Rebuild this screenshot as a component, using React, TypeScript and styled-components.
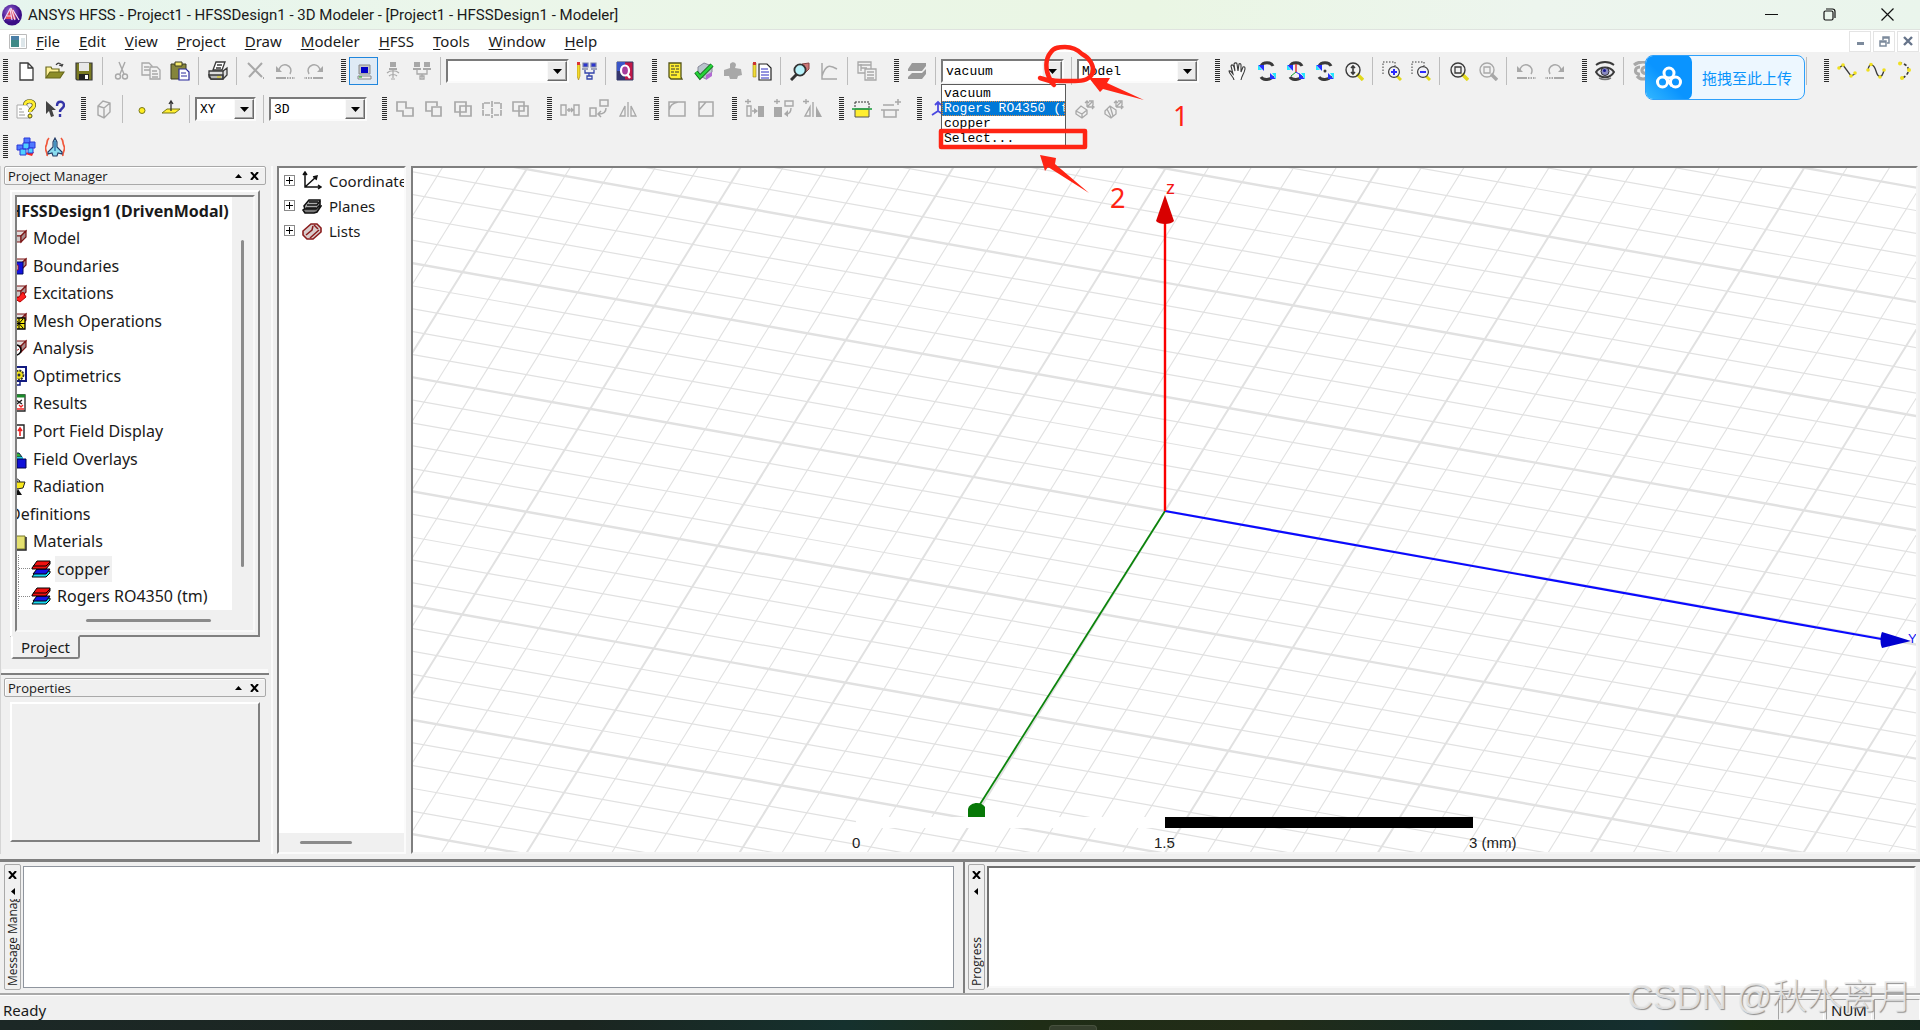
import React from "react";
import styled, { createGlobalStyle, css } from "styled-components";

const UI = `"Noto Sans", "Open Sans", "Noto Sans CJK SC", sans-serif`;
const CAPTION = `"Open Sans", "Noto Sans", sans-serif`;
const MONO = `"Liberation Mono", "DejaVu Sans Mono", monospace`;
const FACE = "#f0f0f0";
const SHADOW = "#7f7f7f";
const RED = "#ff2414";
const G = "#a8a8a8";
const K = "#3a3a3a";

const Global = createGlobalStyle`
  * { box-sizing: border-box; }
  body { margin: 0; background: ${FACE}; color: #1a1a1a; font-family: ${UI}; overflow: hidden; }
  button, select { font: inherit; color: inherit; }
`;

/* ---------- frame ---------- */

const Window = styled.div`
  position: relative;
  display: flex;
  flex-direction: column;
  height: 100vh;
  background: ${FACE};
`;

const TitleBar = styled.header`
  display: flex;
  align-items: center;
  height: 30px;
  padding: 0 4px 0 2px;
  border-bottom: 1px solid #dfe3df;
  background: linear-gradient(90deg, #e6f5ee 0%, #ebf6ea 25%, #eaf6e4 60%, #edf5ee 80%, #eaf5ec 100%);
`;

const Title = styled.h1`
  flex: 1;
  margin: 0 0 0 6px;
  font-family: Roboto, ${UI};
  font-size: 15px;
  font-weight: 400;
  line-height: 20px;
`;

const WindowButton = styled.button`
  display: grid;
  place-items: center;
  width: 58px;
  height: 28px;
  padding: 0;
  border: 0;
  background: none;
`;

const MenuBar = styled.nav`
  display: flex;
  align-items: center;
  gap: 19px;
  height: 22px;
  padding: 0 1px 0 9px;
  background: #fff;
`;

const MenuIcon = styled.span`
  display: grid;
  width: 18px;
  margin-right: -10px;
`;

const MenuItem = styled.button`
  padding: 0;
  border: 0;
  background: none;
  font-size: 15px;
  line-height: 20px;
`;

const MenuText = styled.span`
  display: block;
  &::first-letter { text-decoration: underline; text-underline-offset: 2px; }
`;

const MdiControls = styled.div`
  display: flex;
  gap: 2px;
  margin-left: auto;
`;

const MdiButton = styled.button`
  display: grid;
  place-items: center;
  width: 22px;
  height: 21px;
  padding: 0;
  border: 1px solid #e4e4e4;
  background: #fff;
`;

/* ---------- toolbars ---------- */

const ToolbarArea = styled.div`
  display: flex;
  flex-direction: column;
  background: #f1f1f1;
`;

const ToolbarRow = styled.div<{ $tight?: boolean }>`
  display: flex;
  align-items: center;
  gap: ${(p) => (p.$tight ? 12 : 13)}px;
  height: 38px;
  padding-left: 3px;
  overflow: hidden;
  &:last-child { height: 37px; }
`;

const Toolbar = styled.div`
  display: flex;
  flex: none;
  align-items: center;
`;

const Grip = styled.span`
  width: 5px;
  height: 24px;
  margin-right: 3px;
  background: repeating-linear-gradient(180deg, #2c2c2c 0 1px, #f1f1f1 1px 2px);
`;

const Tool = styled.button<{ $on?: boolean }>`
  display: grid;
  place-items: center;
  width: 29px;
  height: 28px;
  padding: 0;
  border: 1px solid transparent;
  background: none;
  ${(p) => p.$on && css`border-color: #1f86dd; background: #dfeaf5;`}
`;

const Rule = styled.span`
  width: 1px;
  height: 28px;
  margin: 0 4px;
  background: #bdbdbd;
`;

const ComboBox = styled.span<{ $w: number }>`
  display: flex;
  width: ${(p) => p.$w}px;
  height: 24px;
  margin: 0 3px 0 1px;
  border: 2px solid;
  border-color: #7a7a7a #fbfbfb #fbfbfb #7a7a7a;
  background: #fff;
`;

const ComboField = styled.select`
  flex: 1;
  min-width: 0;
  padding: 0 0 0 3px;
  border: 0;
  appearance: none;
  background: none;
  color: #000;
  font-family: ${MONO};
  font-size: 13px;
  outline: 0;
`;

const ComboArrow = styled.span`
  display: grid;
  place-items: center;
  width: 20px;
  border: 1px solid;
  border-color: #fafafa #6a6a6a #6a6a6a #fafafa;
  background: #ececec;
  box-shadow: inset -1px -1px #a5a5a5;
`;

const Popup = styled.ul`
  position: absolute;
  z-index: 2;
  left: 941px;
  top: 84px;
  width: 125px;
  margin: 0;
  padding: 1px 0 0;
  overflow: hidden;
  border: 1px solid #5b5b5b;
  background: #fff;
  color: #000;
  font-family: ${MONO};
  font-size: 13px;
  line-height: 15px;
  list-style: none;
  white-space: nowrap;
`;

const PopupItem = styled.li<{ $on?: boolean }>`
  padding-left: 2px;
  ${(p) => p.$on && css`background: #0078d7; color: #fff; outline: 1px dotted #e08a3c; outline-offset: -1px;`}
`;

/* ---------- docks ---------- */

const Workspace = styled.main`
  display: flex;
  flex: 1;
  min-height: 0;
  padding: 1px 2px 5px 0;
`;

const LeftDock = styled.aside`
  display: flex;
  flex-direction: column;
  flex: none;
  width: 273px;
  margin-right: 4px;
  padding-right: 2px;
  border-left: 1px solid #d5d5d5;
  border-right: 2px solid #fbfbfb;
`;

const Caption = styled.div`
  display: flex;
  align-items: center;
  height: 19px;
  margin: 0 3px;
  padding: 0 3px;
  border: 1px solid #a9a9a9;
  border-radius: 2px;
  box-shadow: inset 1px 1px #fff;
  font-family: ${CAPTION};
  font-size: 13px;
`;

const CaptionText = styled.h2`
  flex: 1;
  margin: 0;
  font-size: inherit;
  font-weight: 400;
  line-height: 16px;
`;

const CaptionButton = styled.button`
  display: grid;
  flex: none;
  place-items: center;
  width: 16px;
  height: 16px;
  padding: 0;
  border: 0;
  background: none;
`;

const ProjectPane = styled.section`
  display: flex;
  flex: 1;
  flex-direction: column;
  min-height: 0;
`;

const Raised = styled.div`
  display: flex;
  flex: 1;
  min-height: 0;
  margin: 5px 9px 0 9px;
  padding: 3px;
  border: 2px solid;
  border-color: #fff #808080 #808080 #fff;
`;

const Sunken = styled.div`
  display: grid;
  flex: 1;
  grid-template: minmax(0, 1fr) 20px / minmax(0, 1fr) 21px;
  min-width: 0;
  border: 2px solid;
  border-color: ${SHADOW} #f8f8f8 #f8f8f8 ${SHADOW};
`;

const TreeView = styled.div`
  overflow: hidden;
  background: #fff;
`;

const TreeList = styled.ul`
  display: flex;
  flex-direction: column;
  height: 100%;
  margin: 0 0 0 -40px;
  padding: 0;
  list-style: none;
`;

const TreeRow = styled.li<{ $level: number }>`
  display: flex;
  flex: 1;
  align-items: center;
  gap: 4px;
  padding-left: ${(p) => 6 + p.$level * 24}px;
  white-space: nowrap;
  ${(p) =>
    p.$level === 2 &&
    css`
      background:
        repeating-linear-gradient(180deg, #888 0 1px, transparent 1px 2px) 41px 0 / 1px 100% no-repeat,
        repeating-linear-gradient(90deg, #888 0 1px, transparent 1px 2px) 42px 50% / 12px 1px no-repeat;
    `}
`;

const TreeIcon = styled.span`
  display: grid;
  flex: none;
  width: 20px;
  height: 20px;
`;

const TreeText = styled.span<{ $bold?: boolean; $on?: boolean }>`
  padding: 0 2px;
  background: ${(p) => (p.$on ? "#f0f0f0" : "transparent")};
  font-size: 16px;
  font-weight: ${(p) => (p.$bold ? 700 : 400)};
  line-height: 26px;
`;

const VScroll = styled.span`
  width: 3px;
  margin: 43px 0 43px 9px;
  border-radius: 2px;
  background: #8b8b8b;
`;

const HScroll = styled.span<{ $from: number; $to: number }>`
  align-self: center;
  height: 3px;
  margin: 0 ${(p) => p.$to}px 0 ${(p) => p.$from}px;
  border-radius: 2px;
  background: #8b8b8b;
`;

const DockTab = styled.button`
  align-self: flex-start;
  z-index: 1;
  width: 69px;
  height: 24px;
  margin: -2px 0 14px 10px;
  padding: 0;
  border: 2px solid;
  border-color: ${FACE} #808080 #808080 #fff;
  border-radius: 0 0 3px 2px;
  background: ${FACE};
  font-size: 15px;
  line-height: 20px;
`;

const PropertiesPane = styled.section`
  display: flex;
  flex-direction: column;
  flex: none;
  height: 181px;
  padding: 3px 0 12px;
  border-top: 2px solid ${SHADOW};
  box-shadow: 0 -5px 0 -1px #fafafa;
`;

const ModelTree = styled.section`
  display: flex;
  flex: none;
  flex-direction: column;
  width: 129px;
  margin-right: 5px;
  border: 2px solid;
  border-color: ${SHADOW} #fbfbfb #fbfbfb ${SHADOW};
  background: ${FACE};
`;

const ModelList = styled.ul`
  flex: 1;
  margin: 0;
  padding: 0 0 0 5px;
  overflow: hidden;
  background: #fff;
  list-style: none;
`;

const ModelRow = styled.li`
  display: flex;
  align-items: center;
  gap: 7px;
  height: 25px;
  font-size: 15px;
  white-space: nowrap;
`;

const ModelScroll = styled.div`
  display: grid;
  height: 19px;
`;

const Expander = styled.button`
  display: grid;
  flex: none;
  place-items: center;
  width: 11px;
  height: 11px;
  padding: 0;
  border: 1px solid #8a8a8a;
  background: #fff;
`;

const Viewport = styled.section`
  display: flex;
  flex: 1;
  min-width: 0;
  border: 2px solid;
  border-color: ${SHADOW} #f4f4f4 #f4f4f4 ${SHADOW};
  background: #fff;
`;

const Scene = styled.svg`
  flex: 1;
  min-width: 0;
  width: 100%;
  height: auto;
`;

const BottomDock = styled.div`
  display: flex;
  flex: none;
  height: 136px;
  border-top: 3px solid ${SHADOW};
  border-bottom: 2px solid #a9a9a9;
`;

const BottomPane = styled.section<{ $first?: boolean }>`
  display: flex;
  flex: ${(p) => (p.$first ? "961 1 0" : "959 1 0")};
  gap: 2px;
  min-width: 0;
  padding: 2px ${(p) => (p.$first ? 9 : 4)}px 3px ${(p) => (p.$first ? 4 : 3)}px;
  border-right: ${(p) => (p.$first ? `2px solid ${SHADOW}` : "0")};
`;

const SideCaption = styled.div`
  display: flex;
  flex: none;
  flex-direction: column;
  align-items: center;
  width: 17px;
  padding: 2px 0 3px;
  border: 1px solid #a9a9a9;
  border-radius: 2px;
  font-family: ${CAPTION};
  font-size: 12px;
`;

const SideText = styled.h2`
  flex: 1;
  min-height: 0;
  margin: 0;
  overflow: hidden;
  font-size: inherit;
  font-weight: 400;
  line-height: 15px;
  text-align: left;
  white-space: nowrap;
  writing-mode: vertical-rl;
  transform: rotate(180deg);
`;

const Output = styled.div<{ $deep?: boolean }>`
  flex: 1;
  margin: 2px 0 2px;
  border: ${(p) => (p.$deep ? "2px solid" : "1px solid #8f959e")};
  ${(p) => p.$deep && css`border-color: #6f6f6f #f8f8f8 #f8f8f8 #6f6f6f;`}
  background: #fff;
`;

const StatusBar = styled.footer`
  display: flex;
  flex: none;
  justify-content: space-between;
  height: 25px;
  padding: 3px 0 0 3px;
  border-top: 1px solid #fff;
  font-size: 15px;
  line-height: 22px;
`;

const StatusCells = styled.div`
  display: flex;
  gap: 2px;
`;

const StatusCell = styled.span`
  width: 46px;
  border: 1px solid;
  border-color: #a5a5a5 #fff transparent #a5a5a5;
  line-height: 20px;
  text-align: center;
`;

const Taskbar = styled.div`
  display: flex;
  flex: none;
  justify-content: center;
  height: 10px;
  padding: 5px 0 0 226px;
  background: linear-gradient(90deg, #1c2826 0%, #1b2520 30%, #15312e 44%, #1f2d16 54%, #222c18 66%, #142b27 78%, #152f2f 86%, #1b2f16 91%, #16291f 100%);
`;

const TaskTab = styled.span`
  width: 48px;
  border: 1px solid #47513e;
  border-bottom: 0;
  border-radius: 4px 4px 0 0;
  background: #353f2d;
`;

/* ---------- overlays ---------- */

const Upload = styled.button`
  position: absolute;
  z-index: 2;
  top: 55px;
  right: 115px;
  display: flex;
  align-items: center;
  width: 160px;
  height: 45px;
  padding: 0;
  overflow: hidden;
  border: 1px solid #2da0fb;
  border-radius: 8px;
  background: #edf7ff;
  color: #0a94fb;
  font-family: "Noto Sans CJK SC", sans-serif;
  font-size: 15px;
`;

const UploadMark = styled.span`
  display: grid;
  place-items: center;
  width: 46px;
  height: 45px;
  margin-right: 10px;
  border-radius: 0 7px 7px 0;
  background: linear-gradient(45deg, #34b8ff, #0a94ff 45%);
`;

const Markup = styled.svg`
  position: absolute;
  z-index: 3;
  left: 930px;
  top: 40px;
  pointer-events: none;
`;

const Watermark = styled.p`
  position: absolute;
  z-index: 3;
  right: 8px;
  bottom: 9px;
  margin: 0;
  color: rgba(235, 235, 235, 0.85);
  font-family: "Liberation Sans", "Noto Sans CJK SC", sans-serif;
  font-size: 35px;
  font-weight: 300;
  line-height: 48px;
  text-shadow: 1px 1px 1px #8f8f8f;
  white-space: nowrap;
  pointer-events: none;
`;

/* ---------- icon drawings, on a 20 unit square ---------- */

const undoShape = (
  <g fill="none" stroke={G} strokeWidth="1.5">
    <path d="M4 10a6 6 0 1 1 11 3" />
    <path d="M1 5v6h6z" fill={G} stroke="none" />
    <path d="M1 17h10" strokeWidth="2" />
    <path d="M12 17h8" strokeWidth="2" strokeDasharray="1.5 1" />
  </g>
);
const lens = (c: string) => (
  <>
    <path d="M13 13l6 6" stroke={c === G ? G : "#e2d91c"} strokeWidth="3.4" />
    <circle cx="9" cy="9" r="7" fill="none" stroke={c} strokeWidth="1.4" />
  </>
);
const rotArcs = (
  <>
    <path d="M4 5C6 .5 14 .5 16 5M16 15c-2 4.500-10 4.500-12 1" fill="none" stroke={K} strokeWidth="3" />
    <path d="M1 4h6v6z" fill="#2430ff" />
    <path d="M1 4v5h4z" fill="#25e6ff" />
    <path d="M19 18h-6v-6z" fill="#2430ff" />
    <path d="M19 18v-6h-4z" fill="#25e6ff" />
  </>
);
const pc = (x: number, y: number, c = G) => (
  <g fill={c}><path d={`M${x} ${y}h6v5h-6z`} /><path d={`M${x - 1} ${y + 6}h8v2h-8z`} /></g>
);
const mirror = (
  <path d="M2 17l5-10v10zM13 7l5 10h-5zM10 3v15" fill="none" stroke={G} strokeWidth="1.3" />
);
const brick = (
  <g stroke="#7c1515" strokeWidth="1.2">
    <path d="M2 8l5-5h12l-5 5z" fill="#e3dcdc" />
    <path d="M2 8h12v6H2z" fill="#cfc6c6" />
    <path d="M14 8l5-5v6l-5 5z" fill="#a98e8e" />
  </g>
);
const slab = (
  <>
    <path d="M1 18l4-6h14v2l-4 4z" fill="#18d8f0" stroke="#000" />
    <path d="M2 15l4-5h13l-4 5z" fill="#1414e6" stroke="#000" />
    <path d="M1 9l5-7h13v3l-4 5H1z" fill="#f01010" stroke="#000" />
    <path d="M2 7h13l4-4" fill="none" stroke="#000" />
  </>
);

const icons: Record<string, React.ReactNode> = {
  new: <path d="M4 2h8l5 5v12H4zM12 2v5h5" fill="#fff" stroke={K} strokeWidth="1.3" />,
  open: (
    <g stroke="#66661a" strokeWidth="1.2">
      <path d="M1 17V6h5l1 2h7v3" fill="#fff29a" />
      <path d="M1 17l4-6h14l-4 6z" fill="#8d8d28" />
      <path d="M11 4c2-3 5-2 6 1l1-2M17 5l-3-1" fill="none" stroke={K} />
    </g>
  ),
  save: (
    <>
      <path d="M2 2h16v17H3l-1-1z" fill="#7a7a22" stroke={K} strokeWidth="1.2" />
      <path d="M5 2h10v8H5z" fill="#e8e8e8" />
      <path d="M5 13h10v6H5z" fill="#222" />
      <path d="M11 14h3v4h-3z" fill="#fff" />
    </>
  ),
  cut: (
    <g fill="none" stroke={G} strokeWidth="1.4">
      <path d="M7 1l5 12M13 1L8 13" />
      <circle cx="6" cy="15.500" r="2.500" />
      <circle cx="13" cy="15.500" r="2.500" />
    </g>
  ),
  copy: (
    <g fill="#f1f1f1" stroke={G} strokeWidth="1.3">
      <path d="M1 2h7l3 3v9H1zM3 6h5M3 9h6" />
      <path d="M9 6h7l3 3v9H9zM11 10h5M11 13h6M11 16h6" />
    </g>
  ),
  paste: (
    <>
      <path d="M1 3h15v15H1z" fill="#85853c" stroke="#3b3b22" />
      <path d="M5 1h7v4H5z" fill="#f5e96c" stroke="#3b3b22" />
      <path d="M9 8h7l3 3v8H9z" fill="#fff" stroke="#2a2a9c" strokeWidth="1.200" />
      <path d="M11 12h5M11 15h6" stroke="#2a2a9c" />
    </>
  ),
  print: (
    <g stroke={K} strokeWidth="1.3">
      <path d="M5 9l3-8h9l-3 8z" fill="#fff" />
      <path d="M9 4h5M8 7h5" />
      <path d="M1 10h14l4-3v7l-4 4H3l-2-2z" fill="#ddd" />
      <path d="M1 14h14v4H3z" fill="#b8b8b8" />
      <path d="M15 10v8" />
      <path d="M9 16h4" stroke="#ddcc22" />
    </g>
  ),
  del: <path d="M2 2l14 14M16 2L3 16M17 17h1" stroke={G} strokeWidth="2" />,
  undo: undoShape,
  redo: <g transform="matrix(-1 0 0 1 20 0)">{undoShape}</g>,
  local: (
    <>
      <path d="M5 4h11v9H5z" fill="#c8c8c8" stroke="#888" />
      <path d="M7 6h7v6H7z" fill="#0000c8" />
      <path d="M4 15h13v3H4z" fill="#eee" stroke="#888" />
      <path d="M5 16h3" stroke="#1a1" />
    </>
  ),
  remote: (
    <>{pc(7, 1)}<path d="M10 9v8M4 12c3-3 9-3 12 0M6 15c2-2 6-2 8 0M8 18h4" fill="none" stroke={G} strokeWidth="1.2" /></>
  ),
  dist: (
    <>{pc(2, 1)}{pc(12, 1)}<path d="M5 9v4h10V9M10 13v4M8 15h4v3H8z" fill="none" stroke={G} strokeWidth="1.3" /></>
  ),
  hpc: (
    <>
      <path d="M6 2h5v4H6zM14 2h5v4h-5z" fill="#2c36d0" stroke="#8088a8" strokeWidth="1.200" />
      <path d="M5 8h6M14 8h6" stroke="#8088a8" strokeWidth="1.600" />
      <path d="M8 9v3h9V9M12 12v3M10 15h5v3h-5z" fill="none" stroke="#3344aa" strokeWidth="1.300" />
      <path d="M0 3h3v12l-1.500 4L0 15z" fill="#f3d92c" stroke="#a08010" strokeWidth=".600" />
      <path d="M0 1h3v3H0z" fill="#d33" />
    </>
  ),
  queue: (
    <>
      <path d="M2 1h16v18H2z" fill="#c01848" stroke="#333a66" />
      <path d="M2 1h8v9H2z" fill="#3a55c8" />
      <path d="M2 10h8v9H2z" fill="#35356e" />
      <path d="M12 13l3 4" stroke="#fff" strokeWidth="2.400" />
      <ellipse cx="10" cy="9.500" rx="4" ry="5" fill="#a83c9c" stroke="#fff" strokeWidth="2.200" />
    </>
  ),
  list: (
    <>
      <path d="M4 2h12v14l1 2H6l-2-2z" fill="#ffee30" stroke="#55551a" strokeWidth="1.300" />
      <path d="M6 5h3M10 5h4M6 8h4M11 8h3M6 11h3M10 11h4M6 14h6" stroke="#333" />
    </>
  ),
  validate: (
    <>
      <path d="M4 6l6-4 8 3v6l-6 7-8-4z" fill="#b9c4cc" stroke="#889" />
      <path d="M12 14l6-3v4l-6 4z" fill="#b36ad2" />
      <path d="M2 11l4 5L18 4" fill="none" stroke="#12611a" strokeWidth="4.400" />
      <path d="M2 11l4 5L18 4" fill="none" stroke="#27d23a" strokeWidth="2.800" />
    </>
  ),
  analyze: <path d="M7 3c2-3 6-2 6 1l-1 3 6 1 1 6-4 1-1 3H7l-1-3H1V9l6-2z" fill={G} />,
  notes: (
    <>
      <path d="M7 3h8l4 4v12H7z" fill="#fff" stroke="#222" strokeWidth="1.200" />
      <path d="M9 8h7M9 11h8M9 14h8M9 17h8" stroke="#2b2bc0" />
      <path d="M1 2h3v14H1z" fill="#f0dc38" stroke="#998018" strokeWidth=".600" />
      <path d="M1 1h3v3H1z" fill="#c33" />
    </>
  ),
  find: (
    <>
      <path d="M7 13l-6 6" stroke="#333" strokeWidth="3" />
      <path d="M12 3l7-1v6l-4 4z" fill="#c77" stroke="#844" />
      <circle cx="10" cy="9" r="5.600" fill="#b9f3fb" stroke="#333" strokeWidth="1.800" />
    </>
  ),
  plot: <path d="M3 2v16h15M3 15C7 3 11 4 18 8" fill="none" stroke={G} strokeWidth="1.500" />,
  report: (
    <g fill="#f1f1f1" stroke={G} strokeWidth="1.300">
      <path d="M1 1h13v11H1zM4 3v7M1 4h13M4 7h6" />
      <path d="M8 8h11v11H8zM10 11h7M10 14h7M10 17h7" />
    </g>
  ),
  layers: (
    <>
      <path d="M5 2h14v3l-4 5H1V8z" fill="#999" />
      <path d="M5 12h10l4-4v5l-4 5H1v-2z" fill="#999" />
    </>
  ),
  help: (
    <>
      <path d="M1 6h10l3 4v9H1z" fill="#fff" stroke="#aaa" />
      <path d="M3 10h3M3 13h5M3 16h6" stroke="#999" />
      <path d="M9 6c0-5 9-5 9 0 0 4-4 3-4 7" fill="none" stroke="#55551a" strokeWidth="4.200" />
      <path d="M9 6c0-5 9-5 9 0 0 4-4 3-4 7" fill="none" stroke="#ffee30" strokeWidth="2.800" />
      <circle cx="14" cy="17" r="2" fill="#ffee30" stroke="#55551a" />
    </>
  ),
  whats: (
    <>
      <path d="M1 2v13l3-3 2 6 3-1-2-6h4z" fill="#444" />
      <path d="M12 7c0-6 7-5 7-1 0 4-4 3-4 7M15 15v3" fill="none" stroke="#3535a8" strokeWidth="2.400" />
    </>
  ),
  box: <path d="M4 7l5-5 7 2v9l-6 6-6-3zM4 7l6 2 6-5M10 9v10" fill="none" stroke={G} strokeWidth="1.400" />,
  dot: <circle cx="10" cy="11.500" r="3" fill="#ffee20" stroke="#77771a" />,
  plane: (
    <>
      <path d="M1 14l5-4h13l-5 4z" fill="#ffee30" stroke="#77771a" />
      <path d="M10 12V3M8 5l2-3 2 3" fill="none" stroke="#333" strokeWidth="1.300" />
    </>
  ),
  unite: <path d="M2 3h9v6h7v8H8v-5H2z" fill="none" stroke={G} strokeWidth="1.700" />,
  subtract: <path d="M8 12H2V3h11v4M8 8h9v9H8z" fill="none" stroke={G} strokeWidth="1.700" />,
  intersect: <path d="M2 3h11v10H2zM7 7h11v10H7z" fill="none" stroke={G} strokeWidth="1.700" />,
  split: <path d="M8 4H1v12h7M12 4h7v12h-7M10 2v17" fill="none" stroke={G} strokeWidth="1.600" strokeDasharray="6 1" />,
  imprint: <path d="M2 3h11v9H2zM8 7h9v10H8z" fill="none" stroke={G} strokeWidth="1.600" />,
  move: <path d="M1 6h5v10H1zM14 6h5v10h-5zM7 11h6M11 9l2 2-2 2M9 9v4" fill="none" stroke={G} strokeWidth="1.400" />,
  rotate: <path d="M1 9h6v8H1zM11 1h8v6h-8zM17 9c0 4-3 6-7 6M12 12l-3 3 3 3" fill="none" stroke={G} strokeWidth="1.500" />,
  mirror,
  fillet: <path d="M2 3h16v14H2zM2 11c1-5 4-7 9-8" fill="none" stroke={G} strokeWidth="1.500" />,
  chamfer: <path d="M3 3h14v14H3zM3 11l7-8" fill="none" stroke={G} strokeWidth="1.500" />,
  dupMove: (
    <><path d="M2 7h4v10H2zM7 12h5M3 0v5M0 2.500h6" fill="none" stroke={G} strokeWidth="1.400" /><path d="M13 7h6v11h-6zM9 9l4 3-4 3z" fill={G} /></>
  ),
  dupRot: (
    <><path d="M11 2h8v5h-8zM17 9c0 4-2 6-5 6M3 0v5M0 2.500h6" fill="none" stroke={G} strokeWidth="1.400" /><path d="M0 8h8v10H0zM14 11v7l-4-3z" fill={G} /></>
  ),
  dupMirror: (
    <><path d="M2 17l5-9v9zM10 3v15M3 0v5M0 2.500h6" fill="none" stroke={G} strokeWidth="1.400" /><path d="M13 7l6 11h-6z" fill={G} /></>
  ),
  section: (
    <>
      <path d="M3 3h14v6M3 3v6" fill="none" stroke="#333" strokeDasharray="2 1" />
      <path d="M3 10h14v8H3z" fill="#ffee30" stroke="#555" />
      <path d="M0 10h20" stroke="#22a043" strokeWidth="1.600" />
    </>
  ),
  section2: <path d="M2 6h11M3 11v7h12v-7M0 11h18M17 0v6M14 3h6" fill="none" stroke={G} strokeWidth="1.500" />,
  axes: <path d="M8 12V3M5 6l3-3 3 3M8 12l-6 4M8 12l6 4" fill="none" stroke="#4a48e0" strokeWidth="1.800" />,
  relCs: <path d="M1 12l5-5 6 4v4l-5 4-6-4zM1 12l6 3 5-4M7 15v4M12 8V2M10 4l2-2 2 2M12 8h6M17 6l2 2-2 2M12 8l5-5M14 2h4v4" fill="none" stroke={G} strokeWidth="1.300" />,
  faceCs: <path d="M1 12l5-5 6 4v4l-5 4-6-4zM3 10l4 8M6 7l3 10M12 8V2M10 4l2-2 2 2M12 8h6M17 6l2 2-2 2M12 8l5-5M14 2h4v4" fill="none" stroke={G} strokeWidth="1.300" />,
  pan: (
    <path d="M6 19c0-3-5-6-5-9 2-1 3 2 4 3L3 5c1-2 2-1 3 1l1 4-1-7c1-2 3-1 3 0l1 7 1-7c1-1 2 0 2 1l0 7 2-5c2-1 2 1 2 2-1 5-3 6-4 11" fill="#fafafa" stroke={K} strokeWidth="1.100" />
  ),
  rot: rotArcs,
  rotAxis: <>{rotArcs}<path d="M10 3v8" stroke="#e01818" strokeWidth="1.300" /><path d="M10 11l-5 4" stroke="#10a030" /><path d="M10 11l6 4" stroke="#22f" /></>,
  rotPoint: <>{rotArcs}<circle cx="10" cy="10" r="1.500" fill={K} /></>,
  zoom: <>{lens(K)}<path d="M9 5v8M7 7l2-2 2 2M7 11l2 2 2-2" fill="none" stroke={K} strokeWidth="1.600" /></>,
  zoomIn: (
    <>
      <path d="M1 13V1h12v4" fill="none" stroke={K} strokeDasharray="1.500 1.500" />
      <path d="M15 15l4 4" stroke="#e2d91c" strokeWidth="3" />
      <circle cx="12" cy="11" r="5.400" fill="#f2f2f6" stroke={K} strokeWidth="1.200" />
      <path d="M9 11h6M12 8v6" stroke="#2a2aff" strokeWidth="2" />
    </>
  ),
  zoomOut: (
    <>
      <path d="M1 13V1h12v4" fill="none" stroke={K} strokeDasharray="1.500 1.500" />
      <path d="M15 15l4 4" stroke="#e2d91c" strokeWidth="3" />
      <circle cx="12" cy="11" r="5.400" fill="#f2f2f6" stroke={K} strokeWidth="1.200" />
      <path d="M9 11h6" stroke="#2a2aff" strokeWidth="2" />
    </>
  ),
  fit: <>{lens(K)}<path d="M6 6h6v6H6z" fill="none" stroke={K} strokeWidth="1.300" /></>,
  fitSel: <>{lens(G)}<path d="M6 6h6v6H6z" fill="none" stroke={G} strokeWidth="1.300" /></>,
  eye: (
    <>
      <path d="M1 4c5-4 13-4 18 0" fill="none" stroke={K} strokeWidth="1.800" />
      <path d="M1 11c4-6 14-6 18 0-4 7-14 7-18 0z" fill="#e8e8ee" stroke={K} strokeWidth="2" />
      <circle cx="10" cy="10.500" r="4" fill="#8a8ac0" stroke="#333" />
      <circle cx="9.500" cy="9.500" r="1.500" fill="#1a1a90" />
      <path d="M4 17c4 2 8 2 12 0" fill="none" stroke="#777" strokeWidth="1.400" />
    </>
  ),
  hide: (
    <path d="M1 4c5-4 13-4 18 0M7 6c-6 0-6 8 0 7M16 6c-9-2-9 8-2 6M4 15c3 4 9 4 12 0" fill="none" stroke={G} strokeWidth="3.200" />
  ),
  poly: <><path d="M2 7l4-3 8 11 4-2" fill="none" stroke={K} strokeWidth="1.300" /><g fill="#f0e020"><circle cx="2" cy="7" r="1.800" /><circle cx="6" cy="4" r="1.800" /><circle cx="14" cy="15" r="1.800" /><circle cx="18" cy="12" r="1.800" /></g></>,
  spline: <><path d="M2 9c1-8 6-6 8 1s6 8 8-1" fill="none" stroke={K} strokeWidth="1.300" /><g fill="#f0e020"><circle cx="2" cy="9" r="1.800" /><circle cx="5" cy="3.500" r="1.800" /><circle cx="14" cy="16" r="1.800" /><circle cx="18" cy="9" r="1.800" /></g></>,
  arc: <><path d="M4 2c10 0 14 10 2 16" fill="none" stroke={K} strokeWidth="1.600" strokeDasharray="3 2" /><g fill="#f0e020"><circle cx="5" cy="2.500" r="2" /><circle cx="14" cy="9" r="2" /><circle cx="7" cy="17" r="2" /></g></>,
  cubes: (
    <g stroke="#2c38d8" strokeWidth="1">
      <path d="M6 16l12-1-2 4z" fill="#f02828" stroke="none" />
      <path d="M8 1h6v5H8zM1 8h6v5H1zM13 5h6v6h-6z" fill="#4f78ff" />
      <path d="M7 6h6v6H7zM4 12h6v6H4zM12 11h5v5h-5z" fill="#4fd0ff" />
    </g>
  ),
  jet: (
    <>
      <path d="M4 1C1 4 3 5 1 9s2 6 1 10M16 1c3 3 1 4 3 8s-2 6-1 10" fill="none" stroke="#f0583c" strokeWidth="1.700" />
      <path d="M10 1l2 4v5l5 5v2l-4-1-1 3H8l-1-3-4 1v-2l5-5V5z" fill="#8adcee" stroke="#223a66" strokeWidth="1.100" />
      <path d="M10 4v10" stroke="#2c6fae" strokeWidth="1.400" />
    </>
  ),
  blank: null,
};

const treeIcons: Record<string, React.ReactNode> = {
  none: null,
  model: brick,
  bound: <>{brick}<path d="M7 6h9v12h-9z" fill="#1212e0" stroke="#000a60" /><path d="M7 9h4v5H7z" fill="#fff" stroke="#a01010" /></>,
  excite: <>{brick}<path d="M8 12l3 3 5-6 3 5-6 5-5-3z" fill="#ff2020" stroke="#b00" /></>,
  mesh: <>{brick}<path d="M6 7h12v11H6z" fill="#f3e518" stroke="#000" strokeWidth="1.300" /><path d="M8 8l8 9M16 8l-8 9M6 12.500h12M12 7v11" stroke="#000" /></>,
  analysis: <>{brick}<circle cx="9" cy="12" r="5" fill="#fff" stroke="#000" strokeWidth="1.500" /><path d="M9 9v4l3-2" fill="none" stroke="#a11" /></>,
  opti: <><path d="M3 1h16v14H3z" fill="#fff" stroke="#111a80" strokeWidth="2" /><circle cx="12" cy="9" r="4.500" fill="#f3e518" stroke="#333" strokeWidth="1.800" strokeDasharray="2 1" /><circle cx="12" cy="9" r="1.500" fill="#333" /><path d="M13 15v4H4" fill="none" stroke="#111a80" strokeWidth="1.500" /></>,
  results: <><path d="M3 2h15v16H3z" fill="#fff" stroke="#222" strokeWidth="1.300" /><path d="M3 3h15" stroke="#1a8a2a" strokeWidth="3" /><path d="M9 7l6 4M15 7l-5 4" stroke="#222" strokeWidth="1.400" /><path d="M9 16h8M12 12l2 2 2-2" fill="none" stroke="#e22" strokeWidth="1.300" /></>,
  port: <><path d="M3 4h14v13H3z" fill="#fff" stroke="#222" strokeWidth="1.400" /><path d="M13 15V8M11 10l2-3 2 3" fill="none" stroke="#e22" strokeWidth="1.600" /></>,
  field: <><path d="M4 4h8l3 4H6z" fill="#35b82f" stroke="#125" /><path d="M7 8h9v4H7z" fill="#25c8e0" /><path d="M10 10h9v9h-9z" fill="#1010d8" stroke="#000048" /></>,
  radiation: <><path d="M9 2l4 3-2 3z" fill="#eee" stroke="#222" /><path d="M6 6h12l-2 6-6 1z" fill="#f8e81c" stroke="#222" /><path d="M11 13l4 6H7z" fill="#111" /></>,
  folder: <><path d="M1 5h17v13H1z" fill="#e4e070" stroke="#77772a" /><path d="M19 6v13H3" fill="none" stroke="#222" strokeWidth="1.500" /></>,
  slab,
  cs: <path d="M3 2v14h15M3 16L14 6M1 4l2-3 2 3M16 14l3 2-3 2M11 6l4-1-1 4" fill="none" stroke="#111" strokeWidth="1.500" />,
  planes: <><path d="M1 14l5-4h13l-4 6-3 1H3z" fill="#777" stroke="#111" strokeWidth="1.600" /><path d="M2 10l5-6h11v5l-4 4H3z" fill="#aaa" stroke="#111" strokeWidth="1.600" /><path d="M5 9h10l3-4M7 6h9M4 12h10" fill="none" stroke="#111" strokeWidth="1.300" /></>,
  lists: <><path d="M1 10l8-7h6l4 4v4l-8 7H5l-4-4z" fill="#d9cccc" stroke="#8a1c1c" strokeWidth="1.600" /><path d="M4 14l6-5 1-4M8 17l9-8M12 4l4 4" fill="none" stroke="#8a1c1c" strokeWidth="1.500" /></>,
};

const Glyph = ({ art, size = 20 }: { art: React.ReactNode; size?: number }) => (
  <svg width={size} height={size} viewBox="0 0 20 20" fill="none" aria-hidden="true">{art}</svg>
);

/* ---------- data ---------- */

type Combo = { label: string; value: string; width: number };
type Part = string | Combo;

const combo = (label: string, value: string, width: number): Combo => ({ label, value, width });

const rows: Part[][][] = [
  [
    ["new", "open", "save", "|", "cut", "copy", "paste", "|", "print", "|", "del", "undo", "redo"],
    ["local*", "remote", "dist", "|", combo("Setup", "", 123), "hpc", "|", "queue"],
    ["list", "validate", "analyze", "notes", "|", "find", "plot", "|", "report"],
    ["layers", "|", combo("Material", "vacuum", 123), "|", combo("Model type", "Model", 122)],
    ["pan", "rot", "rotAxis", "rotPoint", "zoom", "|", "zoomIn", "zoomOut", "|", "fit", "fitSel", "|", "undo", "redo"],
    ["eye", "|", "hide", "blank", "blank", "blank", "blank", "blank", "|"],
    ["poly", "spline", "arc"],
  ],
  [
    ["help", "whats"],
    ["box", "|", "dot", "plane", "|", combo("Plane", "XY", 61), "|", combo("Mode", "3D", 98)],
    ["unite", "subtract", "intersect", "split", "imprint"],
    ["move", "rotate", "mirror"],
    ["fillet", "chamfer"],
    ["dupMove", "dupRot", "dupMirror"],
    ["section", "section2"],
    ["axes", "blank", "blank", "blank", "blank", "relCs", "faceCs"],
  ],
  [["cubes", "jet"]],
];

const menus = ["File", "Edit", "View", "Project", "Draw", "Modeler", "HFSS", "Tools", "Window", "Help"];

const tree: { text: string; icon: string; level: number; bold?: boolean; on?: boolean }[] = [
  { text: "HFSSDesign1 (DrivenModal)", icon: "none", level: 0, bold: true },
  { text: "Model", icon: "model", level: 1 },
  { text: "Boundaries", icon: "bound", level: 1 },
  { text: "Excitations", icon: "excite", level: 1 },
  { text: "Mesh Operations", icon: "mesh", level: 1 },
  { text: "Analysis", icon: "analysis", level: 1 },
  { text: "Optimetrics", icon: "opti", level: 1 },
  { text: "Results", icon: "results", level: 1 },
  { text: "Port Field Display", icon: "port", level: 1 },
  { text: "Field Overlays", icon: "field", level: 1 },
  { text: "Radiation", icon: "radiation", level: 1 },
  { text: "Definitions", icon: "none", level: 0 },
  { text: "Materials", icon: "folder", level: 1 },
  { text: "copper", icon: "slab", level: 2, on: true },
  { text: "Rogers RO4350 (tm)", icon: "slab", level: 2 },
];

/* ---------- parts ---------- */

const ToolPart = ({ part }: { part: Part }) => {
  if (typeof part !== "string") {
    return (
      <ComboBox $w={part.width}>
        <ComboField aria-label={part.label} defaultValue={part.value}>
          <option>{part.value}</option>
        </ComboField>
        <ComboArrow>
          <svg width="9" height="5" aria-hidden="true"><path d="M0 0h9L4.500 5z" fill="#000" /></svg>
        </ComboArrow>
      </ComboBox>
    );
  }
  if (part === "|") return <Rule />;
  const name = part.replace("*", "");
  return (
    <Tool type="button" aria-label={name} $on={part.endsWith("*")}>
      <Glyph art={icons[name]} />
    </Tool>
  );
};

const CrossMark = () => (
  <svg width="9" height="8" aria-hidden="true"><path d="M1 0l7 8M8 0L1 8" stroke="#000" strokeWidth="2" /></svg>
);

const PinMark = ({ side }: { side?: boolean }) => (
  <svg width="8" height="8" aria-hidden="true">
    <path d={side ? "M6 1v7L2 4.500z" : "M1 6h7L4.500 2z"} fill="#000" />
  </svg>
);

const DockCaption = ({ text }: { text: string }) => (
  <Caption>
    <CaptionText>{text}</CaptionText>
    <CaptionButton type="button" aria-label={`Pin ${text}`}><PinMark /></CaptionButton>
    <CaptionButton type="button" aria-label={`Close ${text}`}><CrossMark /></CaptionButton>
  </Caption>
);

const DockSideCaption = ({ text }: { text: string }) => (
  <SideCaption>
    <CaptionButton type="button" aria-label={`Close ${text}`}><CrossMark /></CaptionButton>
    <CaptionButton type="button" aria-label={`Pin ${text}`}><PinMark side /></CaptionButton>
    <SideText>{text}</SideText>
  </SideCaption>
);

// Isometric ground grid: every fifth line in each direction is a major line.
const ORIGIN = { x: 752, y: 343 };
const range = (from: number, to: number) => Array.from({ length: to - from + 1 }, (_, i) => from + i);

const ModelScene = () => (
  <Scene role="img" aria-label="3D modeler view">
    <g stroke="#e1e1e1">
      {range(-30, 60).map((k) => {
        const x = ORIGIN.x + k * 42.56;
        return <line key={`x${k}`} x1={x + 0.6226 * 400} y1={ORIGIN.y - 400} x2={x - 0.6226 * 1000} y2={ORIGIN.y + 1000} strokeWidth={k % 5 ? 1.1 : 2} />;
      })}
      {range(-35, 50).map((k) => {
        const y = ORIGIN.y + k * 22.84;
        return <line key={`y${k}`} x1={ORIGIN.x - 800} y1={y - 0.1777 * 800} x2={ORIGIN.x + 1800} y2={y + 0.1777 * 1800} strokeWidth={k % 5 ? 1.2 : 2.4} />;
      })}
    </g>
    <line x1="752" y1="343" x2="564" y2="641" stroke="#0b840b" strokeWidth="1.800" />
    <path d="M555 649v-8c2-7 13-8 17-2v10z" fill="#077807" />
    <path d="M443 649h309v11H443z" fill="#fff" />
    <path d="M752 649h308v11H752z" fill="#000" />
    <line x1="752" y1="343" x2="1474" y2="472" stroke="#0a0aff" strokeWidth="2.200" />
    <path d="M1469 464l29 9-29 7c-2-4-2-12 0-16z" fill="#0000d0" />
    <line x1="752" y1="343" x2="752" y2="50" stroke="#fa0000" strokeWidth="2.400" />
    <path d="M752 27l9 26c-3 4-15 4-18 0z" fill="#d80000" />
    <g fontFamily={`"Liberation Sans", Arial, sans-serif`} fontSize="15" fill="#222">
      <text x="439" y="680">0</text>
      <text x="741" y="680">1.5</text>
      <text x="1056" y="680">3 (mm)</text>
      <text x="753" y="26" fontSize="18" fill="#f41414">z</text>
      <text x="1495" y="475" fontSize="13" fill="#1414f0">Y</text>
    </g>
  </Scene>
);

export default function App() {
  return (
    <Window>
      <Global />
      <TitleBar>
        <svg width="20" height="22" viewBox="0 0 20 22" aria-hidden="true">
          <defs>
            <radialGradient id="ball" cx=".4" cy=".35"><stop offset="0" stopColor="#9a68d8" /><stop offset="1" stopColor="#3a0d86" /></radialGradient>
          </defs>
          <ellipse cx="10" cy="11" rx="10" ry="10.500" fill="url(#ball)" />
          <path d="M3 15l5-9 2 9zM8 6l3-1 3 10h-3z" fill="#e64a5a" />
          <path d="M2 16L8 5l2 11M9 4l4 12M11 6l6 10M5 12h4" fill="none" stroke="#f3d9ee" strokeWidth="1.200" />
        </svg>
        <Title>ANSYS HFSS - Project1 - HFSSDesign1 - 3D Modeler - [Project1 - HFSSDesign1 - Modeler]</Title>
        <WindowButton type="button" aria-label="Minimize"><svg width="13" height="13"><path d="M0 6.500h13" stroke="#111" /></svg></WindowButton>
        <WindowButton type="button" aria-label="Restore">
          <svg width="13" height="13" fill="none" stroke="#111" strokeWidth="1.200"><rect x="1" y="3" width="9" height="9" rx="1.500" /><path d="M3 1h6.500c1.500 0 2.500 1 2.500 2.500V10" /></svg>
        </WindowButton>
        <WindowButton type="button" aria-label="Close"><svg width="13" height="13"><path d="M.5.5l12 12M12.500.5l-12 12" stroke="#111" strokeWidth="1.200" /></svg></WindowButton>
      </TitleBar>

      <MenuBar>
        <MenuIcon>
          <svg width="18" height="15" aria-hidden="true">
            <path d="M.5.5h17v14H.5z" fill="#fff" stroke="#bbb" />
            <path d="M2 2h8v11H2z" fill="#3f8a86" /><path d="M2 2h8v4H2z" fill="#4a7fa6" />
            <path d="M12 4h4v9h-4z" fill="#dde6ea" />
          </svg>
        </MenuIcon>
        {menus.map((m) => <MenuItem key={m} type="button"><MenuText>{m}</MenuText></MenuItem>)}
        <MdiControls>
          <MdiButton type="button" aria-label="Minimize design"><svg width="9" height="10"><path d="M1 7.500h7" stroke="#7c8a9c" strokeWidth="3" /></svg></MdiButton>
          <MdiButton type="button" aria-label="Restore design"><svg width="11" height="11" fill="none" stroke="#7c8a9c" strokeWidth="1.500"><path d="M1 5h6v5H1zM4 4V1h6v6H8M1 6h6M4 2h6" /></svg></MdiButton>
          <MdiButton type="button" aria-label="Close design"><svg width="10" height="10"><path d="M1 1l8 8M9 1L1 9" stroke="#66748a" strokeWidth="2.400" /></svg></MdiButton>
        </MdiControls>
      </MenuBar>

      <ToolbarArea>
        {rows.map((bars, r) => (
          <ToolbarRow key={r} $tight={r > 0}>
            {bars.map((parts, b) => (
              <Toolbar key={b} role="toolbar">
                <Grip />
                {parts.map((p, i) => <ToolPart key={i} part={p} />)}
              </Toolbar>
            ))}
          </ToolbarRow>
        ))}
      </ToolbarArea>

      <Workspace>
        <LeftDock>
          <ProjectPane>
            <DockCaption text="Project Manager" />
            <Raised>
              <Sunken>
                <TreeView>
                  <TreeList>
                    {tree.map((n) => (
                      <TreeRow key={n.text} $level={n.level}>
                        <TreeIcon><Glyph art={treeIcons[n.icon]} /></TreeIcon>
                        <TreeText $bold={n.bold} $on={n.on}>{n.text}</TreeText>
                      </TreeRow>
                    ))}
                  </TreeList>
                </TreeView>
                <VScroll />
                <HScroll $from={69} $to={21} />
              </Sunken>
            </Raised>
            <DockTab type="button">Project</DockTab>
          </ProjectPane>
          <PropertiesPane>
            <DockCaption text="Properties" />
            <Raised />
          </PropertiesPane>
        </LeftDock>

        <ModelTree>
          <ModelList>
            {[["Coordinate Systems", "cs"], ["Planes", "planes"], ["Lists", "lists"]].map(([text, icon]) => (
              <ModelRow key={text}>
                <Expander type="button" aria-label={`Expand ${text}`}>
                  <svg width="7" height="7"><path d="M0 3.500h7M3.500 0v7" stroke="#000" /></svg>
                </Expander>
                <TreeIcon><Glyph art={treeIcons[icon]} /></TreeIcon>
                <span>{text}</span>
              </ModelRow>
            ))}
          </ModelList>
          <ModelScroll><HScroll $from={21} $to={52} /></ModelScroll>
        </ModelTree>

        <Viewport><ModelScene /></Viewport>
      </Workspace>

      <BottomDock>
        <BottomPane $first>
          <DockSideCaption text="Message Manager" />
          <Output />
        </BottomPane>
        <BottomPane>
          <DockSideCaption text="Progress" />
          <Output $deep />
        </BottomPane>
      </BottomDock>

      <StatusBar>
        <span>Ready</span>
        <StatusCells><StatusCell /><StatusCell>NUM</StatusCell><StatusCell /></StatusCells>
      </StatusBar>
      <Taskbar><TaskTab /></Taskbar>

      <Popup role="listbox" aria-label="Materials">
        <PopupItem role="option">vacuum</PopupItem>
        <PopupItem role="option" $on>Rogers RO4350 (tm)</PopupItem>
        <PopupItem role="option">copper</PopupItem>
        <PopupItem role="option">Select...</PopupItem>
      </Popup>

      <Upload type="button">
        <UploadMark>
          <svg width="28" height="26" viewBox="0 0 28 26" fill="none" stroke="#fff" strokeWidth="3" aria-hidden="true">
            <circle cx="14" cy="8" r="5" /><circle cx="7.500" cy="17" r="5" /><circle cx="20.500" cy="17" r="5" /><path d="M11 13l6 8" />
          </svg>
        </UploadMark>
        拖拽至此上传
      </Upload>

      <Markup width="270" height="180" viewBox="930 40 270 180" aria-hidden="true">
        <g fill="none" stroke={RED} strokeWidth="4.500" strokeLinecap="round" strokeLinejoin="round">
          <path d="M1040 78l10 3 4 4M1050 79c-5-9-5-20 1-27 3-5 9-5 14-5 7 0 12 2 17 7 8 4 12 12 11 18-3 8-10 9-18 9-10 0-20 1-27-2" />
          <rect x="941" y="131" width="144" height="16" />
        </g>
        <g fill={RED}>
          <path d="M1089 78h21l-3 5 37 17-41-11-3 3z" />
          <path d="M1040 155l16 3-1 6 34 29-41-26-3 4z" />
        </g>
        <g fill={RED} fontFamily={`"Noto Sans", sans-serif`} fontSize="27">
          <text x="1173" y="126">1</text>
          <text x="1110" y="208">2</text>
        </g>
      </Markup>

      <Watermark>CSDN @秋水离月</Watermark>
    </Window>
  );
}
